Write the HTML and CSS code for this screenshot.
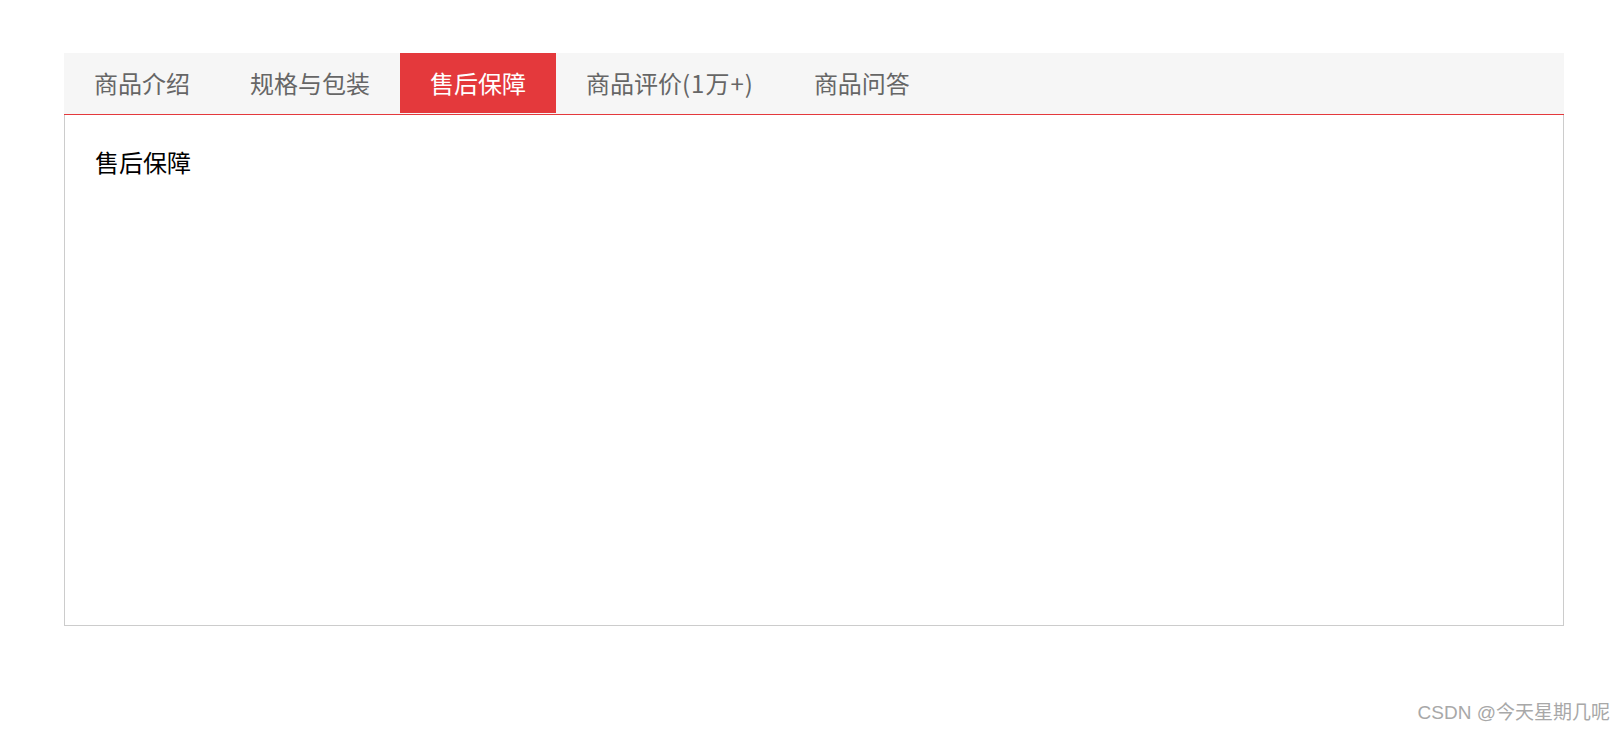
FILE: index.html
```html
<!DOCTYPE html>
<html lang="zh-CN">
<head>
<meta charset="UTF-8">
<meta name="viewport" content="width=device-width, initial-scale=1.0">
<title>商品详情</title>
<link rel="stylesheet" href="styles.css">
</head>
<body>

<div class="detail">
    <!-- Tab bar -->
    <ul class="tabs">
        <li>商品介绍</li>
        <li>规格与包装</li>
        <li class="current">售后保障</li>
        <li>商品评价<span class="count">(1万+)</span></li>
        <li>商品问答</li>
    </ul>

    <!-- Tab content -->
    <div class="panel">售后保障</div>
</div>

<div class="watermark">CSDN @今天星期几呢</div>

</body>
</html>
```

FILE: styles.css
```css
/* Page base */
body {
    margin: 0;
    background-color: #FFFFFF;
    font-family: "Noto Sans CJK SC", "Liberation Sans", sans-serif;
}
.detail {
    width: 1500px;
    margin: 53px 0 0 64px;
}
/* Tab bar */
.tabs {
    display: flex;
    margin: 0;
    padding: 0;
    list-style: none;
    height: 61px;
    background-color: #F6F6F6;
    border-bottom: 1px solid #E4393C; /* JD red underline */
}
.tabs li {
    padding: 0 30px;
    line-height: 60px;
    height: 60px;
    font-size: 24px;
    color: #666666;
    cursor: pointer;
}
.tabs li.current {
    background-color: #E4393C;
    color: #FFFFFF;
}
.tabs .count {
    letter-spacing: 1px;
}
/* Content box */
.panel {
    height: 480px;
    padding: 30px 30px 0;
    border: 1px solid #CCCCCC;
    border-top: 0;
    font-size: 24px;
    line-height: 34px;
    color: #000000;
}
/* Blog watermark */
.watermark {
    position: absolute;
    right: 14px;
    bottom: 7px;
    font-family: "Liberation Sans", "Noto Sans CJK SC", sans-serif;
    font-size: 19px;
    color: #A8A8A8;
    text-shadow: 0 1px 1px #FFFFFF;
}
```
